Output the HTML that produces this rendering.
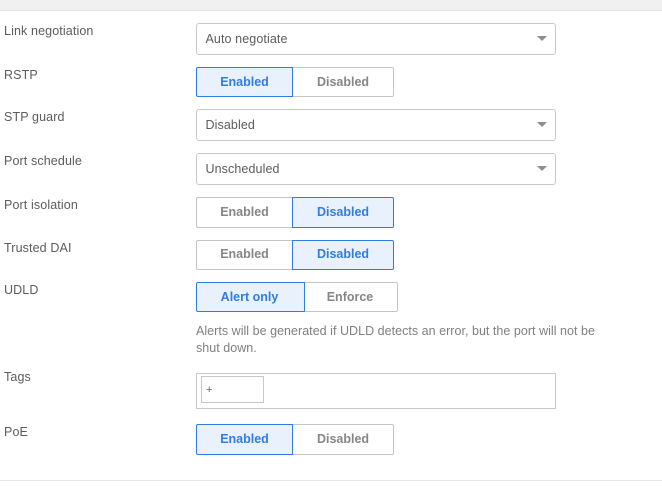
<!DOCTYPE html>
<html>
<head>
<meta charset="utf-8">
<style>
html,body{margin:0;padding:0;width:662px;height:487px;overflow:hidden;background:#fff;font-family:"Liberation Sans",sans-serif;}
.top{position:absolute;left:0;top:0;width:662px;height:10px;background:#f0f0f0;border-bottom:1px solid #e4e4e4;}
.bot{position:absolute;left:0;top:480px;width:662px;height:1px;background:#e6e6e6;}
.l{position:absolute;left:4px;font-size:12.5px;line-height:16px;color:#5c5c5c;white-space:nowrap;letter-spacing:.12px;}
.s{position:absolute;left:196px;width:358px;height:30px;border:1px solid #c8c8c8;border-radius:3px;background:#fff;font-size:12.5px;line-height:30px;color:#5c5c5c;text-indent:8.5px;letter-spacing:.1px;}
.s:after{content:"";position:absolute;right:8px;top:12px;width:0;height:0;border-left:5px solid transparent;border-right:5px solid transparent;border-top:5px solid #8e8e8e;}
.b{position:absolute;box-sizing:border-box;border:1px solid #c4c4c4;background:#fff;color:#868686;font-weight:bold;font-size:12.5px;text-align:center;}
.on{border:1px solid #2f7de1;background:#e9f1fd;color:#2f7de1;z-index:2;}
.lf{border-radius:2px 0 0 2px;}
.rt{border-radius:0 2px 2px 0;}
.h{position:absolute;left:196px;top:323px;width:420px;font-size:12.5px;line-height:17px;color:#808080;letter-spacing:.03px;}
.tags{position:absolute;left:196px;top:373px;width:358px;height:34px;border:1px solid #c8c8c8;}
.tag{position:absolute;left:4px;top:2px;width:61px;height:25px;border:1px solid #c8c8c8;font-size:11px;line-height:26px;color:#666;text-indent:4px;}
</style>
</head>
<body>
<div class="top"></div>

<div class="l" style="top:23px">Link negotiation</div>
<div class="s" style="top:23px">Auto negotiate</div>

<div class="l" style="top:67px">RSTP</div>
<div class="b on lf" style="left:196px;top:67px;width:97px;height:30px;line-height:28px">Enabled</div>
<div class="b rt" style="left:292px;top:67px;width:102px;height:30px;line-height:28px">Disabled</div>

<div class="l" style="top:109px">STP guard</div>
<div class="s" style="top:109px">Disabled</div>

<div class="l" style="top:153px">Port schedule</div>
<div class="s" style="top:153px">Unscheduled</div>

<div class="l" style="top:197px">Port isolation</div>
<div class="b lf" style="left:196px;top:197px;width:97px;height:31px;line-height:28px">Enabled</div>
<div class="b on rt" style="left:292px;top:197px;width:102px;height:31px;line-height:28px">Disabled</div>

<div class="l" style="top:240px">Trusted DAI</div>
<div class="b lf" style="left:196px;top:240px;width:97px;height:30px;line-height:26px">Enabled</div>
<div class="b on rt" style="left:292px;top:240px;width:102px;height:30px;line-height:26px">Disabled</div>

<div class="l" style="top:282px">UDLD</div>
<div class="b on lf" style="left:196px;top:282px;width:109px;height:30px;line-height:28px;padding-right:2px">Alert only</div>
<div class="b rt" style="left:304px;top:282px;width:94px;height:30px;line-height:28px;padding-right:2px">Enforce</div>

<div class="h">Alerts will be generated if UDLD detects an error, but the port will not be shut down.</div>

<div class="l" style="top:369px">Tags</div>
<div class="tags"><div class="tag">+</div></div>

<div class="l" style="top:424px">PoE</div>
<div class="b on lf" style="left:196px;top:424px;width:97px;height:31px;line-height:28px">Enabled</div>
<div class="b rt" style="left:292px;top:424px;width:102px;height:31px;line-height:28px">Disabled</div>

<div class="bot"></div>
</body>
</html>
